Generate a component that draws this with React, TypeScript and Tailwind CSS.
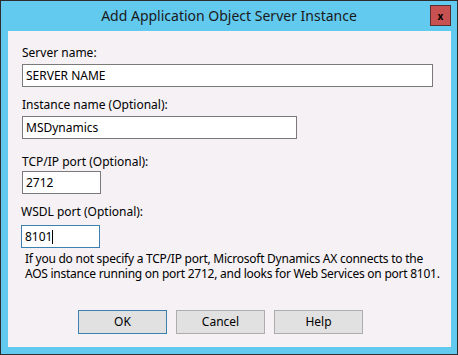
import React from 'react'

const font = { fontFamily: '"Noto Sans", "Open Sans", sans-serif' }

const Field = ({ label, value, width, focused, mt, gap }: { label: string; value: string; width: string; focused?: boolean; mt: string; gap: string }) => {
  return (
    <div className={`flex flex-col ${mt}`}>
      <div className="h-[16px] text-[12px] leading-[16px] text-[#000]">{label}</div>
      <div
        className={`${gap} ${width} h-[23px] bg-white border flex items-center pl-[3px] text-[12px] text-black ${focused ? 'border-[#3c7fb1]' : 'border-[#7a7a7a]'}`}
      >
        <span>{value}</span>
        {focused && <span className="w-px h-[14px] bg-black" />}
      </div>
    </div>
  )
}

export default function App() {
  return (
    <div className="w-[458px] h-[355px] bg-[#62c9ef] border border-[#2d2d2d] flex flex-col" style={font}>
      {/* TITLE BAR */}
      <div className="h-[30px] flex items-start relative">
        <div className="w-full text-center text-[14px] leading-[20px] pt-[5px] text-[#1a1a1a]">Add Application Object Server Instance</div>
        <div className="absolute left-[429px] top-[4px] w-[21px] h-[21px] bg-[#c75050] border border-[#5a2f2f] flex items-center justify-center text-[10px] font-bold text-black leading-none">x</div>
      </div>
      {/* CLIENT */}
      <div className="mx-[7px] w-[443px] h-[316px] bg-[#f5f1f5] flex flex-col pl-[14px] pt-[14px]">
        <Field label="Server name:" value="SERVER NAME" width="w-[411px]" mt="" gap="mt-[3px]" />
        <Field label="Instance name (Optional):" value="MSDynamics" width="w-[275px]" mt="mt-[10px]" gap="mt-[3px]" />
        <Field label="TCP/IP port (Optional):" value="2712" width="w-[79px]" mt="mt-[15px]" gap="mt-[1px]" />
        <div className="-ml-[1px]">
          <Field label="WSDL port (Optional):" value="8101" width="w-[79px]" focused mt="mt-[10px]" gap="mt-[5px]" />
        </div>
        <p className="ml-[3px] mt-[3px] text-[12px] leading-[15px] tracking-[-0.25px] whitespace-nowrap text-black">
          If you do not specify a TCP/IP port, Microsoft Dynamics AX connects to the
          <br />
          AOS instance running on port 2712, and looks for Web Services on port 8101.
        </p>
        <div className="flex gap-[9px] ml-[56px] mt-[29px]">
          <button className="w-[89px] h-[24px] bg-[#e1e1e1] border border-[#3c7fb1] text-[12px] text-black">OK</button>
          <button className="w-[89px] h-[24px] bg-[#e1e1e1] border border-[#adadad] text-[12px] text-black">Cancel</button>
          <button className="w-[89px] h-[24px] bg-[#e1e1e1] border border-[#adadad] text-[12px] text-black">Help</button>
        </div>
      </div>
    </div>
  )
}
